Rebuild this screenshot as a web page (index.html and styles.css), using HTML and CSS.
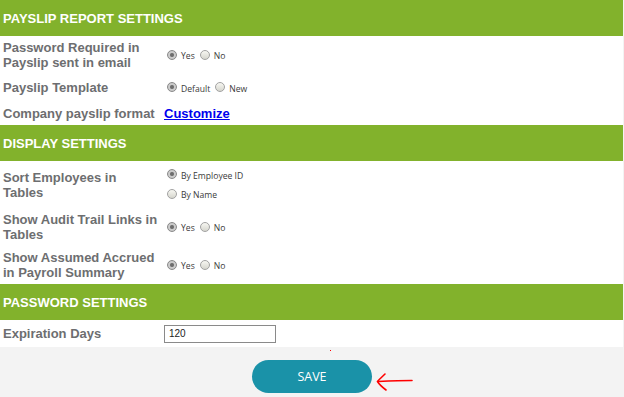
FILE: index.html
```html
<!DOCTYPE html>
<html>
<head>
  <title>Payroll Settings</title>
  <link rel="stylesheet" href="styles.css">
</head>
<body>
  <div class="panel">
    <div class="section-head">PAYSLIP REPORT SETTINGS</div>
    <div class="row">
      <div class="label">Password Required in Payslip sent in email</div>
      <div class="field">
        <label class="opt"><input type="radio" name="pwd" checked>Yes</label>
        <label class="opt"><input type="radio" name="pwd">No</label>
      </div>
    </div>
    <div class="row">
      <div class="label">Payslip Template</div>
      <div class="field">
        <label class="opt"><input type="radio" name="tpl" checked>Default</label>
        <label class="opt"><input type="radio" name="tpl">New</label>
      </div>
    </div>
    <div class="row compact">
      <div class="label">Company payslip format</div>
      <div class="field">
        <a href="#" class="link">Customize</a>
      </div>
    </div>

    <div class="section-head">DISPLAY SETTINGS</div>
    <div class="row">
      <div class="label">Sort Employees in Tables</div>
      <div class="field stacked">
        <label class="opt"><input type="radio" name="sort" checked>By Employee ID</label>
        <label class="opt"><input type="radio" name="sort">By Name</label>
      </div>
    </div>
    <div class="row">
      <div class="label">Show Audit Trail Links in Tables</div>
      <div class="field">
        <label class="opt"><input type="radio" name="audit" checked>Yes</label>
        <label class="opt"><input type="radio" name="audit">No</label>
      </div>
    </div>
    <div class="row">
      <div class="label">Show Assumed Accrued in Payroll Summary</div>
      <div class="field">
        <label class="opt"><input type="radio" name="accrued" checked>Yes</label>
        <label class="opt"><input type="radio" name="accrued">No</label>
      </div>
    </div>

    <div class="section-head">PASSWORD SETTINGS</div>
    <div class="row">
      <div class="label">Expiration Days</div>
      <div class="field">
        <input type="text" class="input-field" value="120">
      </div>
    </div>
  </div>

  <div class="actions">
    <div class="save-wrap">
      <span class="dot"></span>
      <button class="save">SAVE</button>
      <svg class="arrow" width="40" height="24" viewBox="0 0 40 24">
        <path d="M3 11.5 C 14 11, 26 10.5, 37 10.5" fill="none" stroke="#f00" stroke-width="1.6" stroke-linecap="round"/>
        <path d="M10 4 C 7 7, 4 9.5, 2.5 11.5 C 4 14, 7 17, 11 20" fill="none" stroke="#f00" stroke-width="1.6" stroke-linecap="round"/>
      </svg>
    </div>
  </div>
</body>
</html>
```

FILE: styles.css
```css
body {
  margin: 0;
  background-color: #f3f3f3;
  font-family: 'Liberation Sans', Arial, sans-serif;
}

.panel {
  width: 623px;
  background-color: #fff;
}

.section-head {
  height: 36px;
  display: flex;
  align-items: center;
  padding-left: 3px;
  background-color: #82b22c;
  color: #fff;
  font-weight: 700;
  font-size: 13px;
}

.row {
  display: flex;
  align-items: center;
  padding: 4px 0;
  min-height: 19px;
}

.row.compact {
  min-height: 0;
  padding: 5px 0 4px;
}

.label {
  flex: none;
  width: 156px;
  padding: 0 5px 0 3px;
  font-size: 13px;
  line-height: 15px;
  font-weight: 700;
  color: #6d6e70;
}

.field {
  display: flex;
  align-items: center;
}

.field.stacked {
  flex-direction: column;
  align-items: flex-start;
}

.field.stacked .opt {
  height: 19.5px;
  box-sizing: border-box;
}

.opt {
  display: flex;
  align-items: center;
  margin-right: 2px;
  font-family: 'Open Sans', sans-serif;
  font-size: 8.6px;
  color: #3a3a3a;
  padding-top: 2px;
}

.opt input {
  appearance: none;
  -webkit-appearance: none;
  width: 10px;
  height: 10px;
  margin: -3px 4px 0 3px;
  border-radius: 50%;
  border: 1px solid #a2a2a2;
  background: linear-gradient(#f7f7f2, #d6d6ce);
  box-sizing: border-box;
}

.opt input:checked {
  border-color: #8a8a8a;
  background: radial-gradient(circle, #666 0, #777 1.6px, #cfcfcf 2.6px, #bdbdbd 100%);
}

.link {
  color: #0000ee;
  font-size: 13px;
  font-weight: 700;
  line-height: 15px;
  text-decoration: underline;
}

.input-field {
  width: 112px;
  height: 18px;
  box-sizing: border-box;
  border: 1px solid #8a8a8a;
  padding: 0 4px;
  margin: 0;
  font-family: 'Liberation Sans', Arial, sans-serif;
  font-size: 10px;
  color: #222;
}

.actions {
  display: flex;
  justify-content: center;
  padding-top: 13px;
}

.save-wrap {
  position: relative;
}

.save {
  display: block;
  width: 120px;
  height: 33px;
  border: none;
  border-radius: 17px;
  background-color: #1a92a8;
  color: #fff;
  font-family: 'Open Sans', sans-serif;
  font-size: 12.5px;
  cursor: pointer;
}

.arrow {
  position: absolute;
  left: 123px;
  top: 10px;
}

.dot {
  position: absolute;
  left: 78px;
  top: -10px;
  width: 1px;
  height: 1px;
  background: #f00;
}
```
